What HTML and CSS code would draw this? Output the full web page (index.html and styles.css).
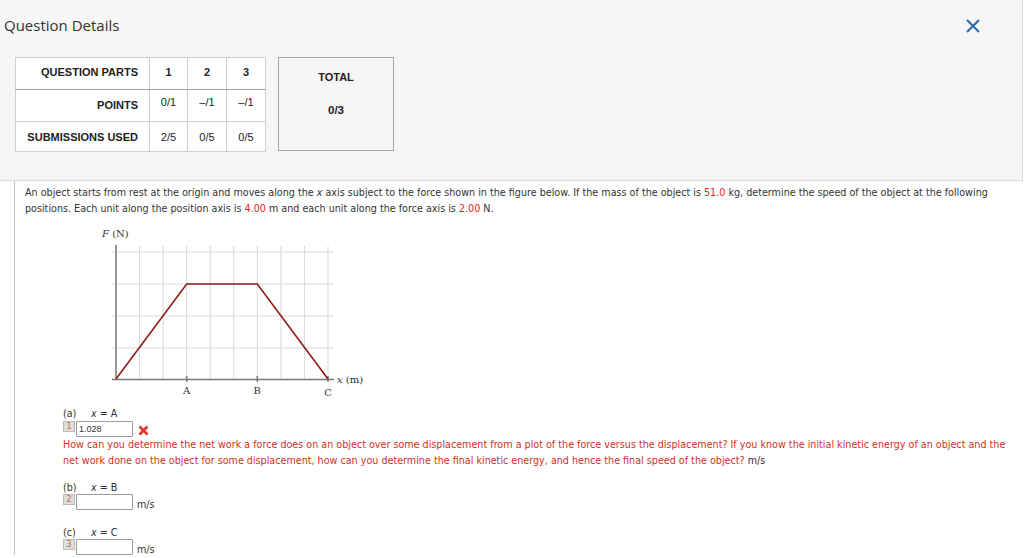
FILE: index.html
```html
<!DOCTYPE html>
<html lang="en">
<head>
    <meta charset="UTF-8">
    <title>Question Details</title>
    <link rel="stylesheet" href="styles.css">
</head>
<body>

    <div class="details">
        <div class="details-top">
            <h2>Question Details</h2>
            <button class="close" aria-label="Close">
                <svg width="14" height="14" viewBox="0 0 14 14"><path d="M1 1 L13 13 M13 1 L1 13" stroke="#2d6aa8" stroke-width="2" fill="none"/></svg>
            </button>
        </div>
        <div class="scores">
            <table class="parts">
                <tr class="row-head">
                    <th class="label">QUESTION PARTS</th>
                    <th>1</th>
                    <th>2</th>
                    <th>3</th>
                </tr>
                <tr class="row-points">
                    <th class="label">POINTS</th>
                    <td>0/1</td>
                    <td>&ndash;/1</td>
                    <td>&ndash;/1</td>
                </tr>
                <tr class="row-subs">
                    <th class="label">SUBMISSIONS USED</th>
                    <td>2/5</td>
                    <td>0/5</td>
                    <td>0/5</td>
                </tr>
            </table>
            <div class="total">
                <div class="total-title">TOTAL</div>
                <div class="total-value">0/3</div>
            </div>
        </div>
    </div>

    <div class="question">
        <p class="prompt">An object starts from rest at the origin and moves along the <i>x</i> axis subject to the force shown in the figure below. If the mass of the object is <span class="red">51.0</span> kg, determine the speed of the object at the following positions. Each unit along the position axis is <span class="red">4.00</span> m and each unit along the force axis is <span class="red">2.00</span> N.</p>

        <svg class="graph" width="300" height="176" viewBox="0 0 300 176">
            <g stroke="#d8d8d8" stroke-width="1">
                <line x1="59.6" y1="23" x2="59.6" y2="156"/>
                <line x1="83.1" y1="23" x2="83.1" y2="156"/>
                <line x1="106.7" y1="23" x2="106.7" y2="156"/>
                <line x1="130.2" y1="23" x2="130.2" y2="156"/>
                <line x1="153.8" y1="23" x2="153.8" y2="156"/>
                <line x1="177.3" y1="23" x2="177.3" y2="156"/>
                <line x1="200.9" y1="23" x2="200.9" y2="156"/>
                <line x1="224.4" y1="23" x2="224.4" y2="156"/>
                <line x1="248" y1="23" x2="248" y2="156"/>
                <line x1="32" y1="29" x2="253" y2="29"/>
                <line x1="32" y1="61" x2="253" y2="61"/>
                <line x1="32" y1="93" x2="253" y2="93"/>
                <line x1="32" y1="125" x2="253" y2="125"/>
            </g>
            <g stroke="#777" stroke-width="1.5">
                <line x1="36" y1="22" x2="36" y2="157"/>
                <line x1="32" y1="156.5" x2="254" y2="156.5"/>
                <line x1="106.7" y1="153" x2="106.7" y2="159"/>
                <line x1="177.3" y1="153" x2="177.3" y2="159"/>
                <line x1="248" y1="153" x2="248" y2="159"/>
            </g>
            <polyline points="36,156 106.7,61 177.3,61 248,156" fill="none" stroke="#8b1c1c" stroke-width="1.6"/>
            <text class="axis-label" x="22" y="14"><tspan font-style="italic">F</tspan> (N)</text>
            <text class="axis-label" x="257" y="160"><tspan font-style="italic">x</tspan> (m)</text>
            <text class="tick-label" x="106.7" y="171" text-anchor="middle">A</text>
            <text class="tick-label" x="177.3" y="171" text-anchor="middle">B</text>
            <text class="tick-label" x="248" y="173" text-anchor="middle">C</text>
        </svg>

        <div class="part part-hinted">
            <div class="part-head"><span class="part-tag">(a)</span><i>x</i> = A</div>
            <div class="answer-row">
                <span class="badge">1</span>
                <span class="answer">1.028</span>
                <svg class="wrong" width="11" height="11" viewBox="0 0 11 11"><path d="M1.5 1.5 L9.5 9.5 M9.5 1.5 L1.5 9.5" stroke="#e2332b" stroke-width="2.6" fill="none"/></svg>
            </div>
            <p class="hint">How can you determine the net work a force does on an object over some displacement from a plot of the force versus the displacement? If you know the initial kinetic energy of an object and the net work done on the object for some displacement, how can you determine the final kinetic energy, and hence the final speed of the object? <span class="unit">m/s</span></p>
        </div>

        <div class="part">
            <div class="part-head"><span class="part-tag">(b)</span><i>x</i> = B</div>
            <div class="answer-row">
                <span class="badge">2</span>
                <span class="answer"></span>
                <span class="unit">m/s</span>
            </div>
        </div>

        <div class="part">
            <div class="part-head"><span class="part-tag">(c)</span><i>x</i> = C</div>
            <div class="answer-row">
                <span class="badge">3</span>
                <span class="answer"></span>
                <span class="unit">m/s</span>
            </div>
        </div>
    </div>

</body>
</html>
```

FILE: styles.css
```css
body {
    margin: 0;
    background-color: #fff;
    color: #333;
    font-family: "DejaVu Sans", Verdana, sans-serif;
}

/* header panel */
.details {
    height: 181px;
    box-sizing: border-box;
    background-color: #f6f6f6;
    border-right: 1px solid #dcdcdc;
    border-bottom: 1px solid #dcdcdc;
    margin-right: 1px;
    padding-left: 4px;
}

.details-top {
    display: flex;
    justify-content: space-between;
    align-items: center;
    height: 50px;
}

.details-top h2 {
    margin: 0;
    font-family: "Open Sans", sans-serif;
    font-weight: 400;
    font-size: 15px;
    color: #333;
}

.close {
    background: none;
    border: none;
    padding: 0;
    margin-right: 42px;
    margin-top: 2px;
    width: 14px;
    height: 14px;
    cursor: pointer;
}

.close svg {
    display: block;
}

.scores {
    display: flex;
    align-items: flex-start;
    gap: 12px;
    margin-left: 11px;
    margin-top: 7px;
    font-family: "Liberation Sans", Arial, sans-serif;
    font-size: 11px;
    color: #222;
}

.parts {
    border-collapse: collapse;
    background-color: #fff;
    border: 1px solid #a8a8a8;
}

.parts th,
.parts td {
    border: 1px solid #cfcfcf;
    padding: 0;
    text-align: center;
}

.parts th {
    font-weight: 700;
}

.parts td {
    font-weight: 400;
    font-size: 11px;
}

.parts .label {
    width: 122px;
    text-align: right;
    padding-right: 11px;
}

.parts tr th:nth-child(2) {
    width: 37px;
}

.parts tr th:nth-child(3) {
    width: 38px;
}

.parts tr th:nth-child(4) {
    width: 38px;
}

.row-head {
    height: 32px;
}

.row-head th {
    border-bottom-color: #a8a8a8;
    padding-bottom: 3px;
}

.row-points {
    height: 32px;
}

.row-points th {
    padding-bottom: 1px;
}

.row-points td {
    vertical-align: top;
    padding-top: 6px;
}

.row-subs {
    height: 30px;
}

.total {
    width: 116px;
    height: 94px;
    box-sizing: border-box;
    border: 1px solid #a8a8a8;
    background-color: #f6f6f6;
    text-align: center;
    font-weight: 700;
}

.total-title {
    margin-top: 13px;
}

.total-value {
    margin-top: 21px;
    font-size: 11.5px;
}

/* question body */
.question {
    margin-left: 14px;
    border-left: 1px solid #c8c8c8;
    padding: 4px 10px 0 10px;
    font-size: 9.6px;
    line-height: 16px;
}

.prompt {
    margin: 0;
}

.red {
    color: #e8221b;
}

.graph {
    display: block;
    margin-left: 55px;
    margin-top: 6px;
}

.axis-label,
.tick-label {
    font-family: "DejaVu Serif", "Liberation Serif", serif;
    font-size: 10px;
    fill: #333;
}

.part {
    margin-left: 38px;
    margin-bottom: 18px;
}

.part-hinted {
    margin-bottom: 14px;
}

.graph + .part {
    margin-top: 9px;
}

.part-head {
    line-height: 12px;
}

.part + .part .part-head {
    line-height: 10px;
}

.part-tag {
    display: inline-block;
    width: 28px;
}

.answer-row {
    display: flex;
    align-items: center;
    gap: 1px;
    height: 17px;
}

.badge {
    width: 12px;
    height: 11px;
    box-sizing: border-box;
    background-color: #ddd;
    border: 1px solid #bbb;
    color: #c86a2a;
    font-size: 8px;
    line-height: 9px;
    text-align: center;
    align-self: flex-start;
    margin-top: 1px;
}

.answer {
    width: 57px;
    height: 16px;
    box-sizing: border-box;
    border: 1px solid #9a9a9a;
    border-radius: 1px;
    font-family: "Liberation Sans", Arial, sans-serif;
    font-size: 9px;
    line-height: 14px;
    padding-left: 2px;
    background-color: #fff;
}

.wrong {
    margin-left: 4px;
    margin-top: 4px;
}

.unit {
    color: #333;
    margin-left: 3px;
    margin-top: 6px;
}

.hint {
    margin: 0;
    color: #d2301f;
}

.hint .unit {
    margin: 0;
}
```
